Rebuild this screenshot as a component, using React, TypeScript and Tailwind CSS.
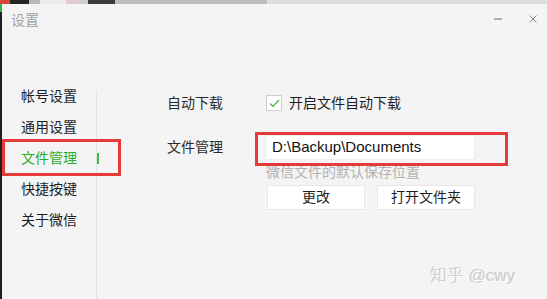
const font = { fontFamily: '"Liberation Sans", "Noto Sans CJK SC", sans-serif' };

const navItems = ["帐号设置", "通用设置", "文件管理", "快捷按键", "关于微信"];

export default function App() {
  return (
    <div
      className="relative flex h-[299px] w-[547px] flex-col overflow-hidden bg-[#f4f4f4]"
      style={font}
    >
      {/* strip of the window behind */}
      <div className="flex h-[4px] shrink-0">
        <div className="w-[10px] bg-[#d9443b]" />
        <div className="w-[19px] bg-[#232323]" />
        <div className="w-[11px] bg-[#b9b9b9]" />
        <div className="w-[26px] bg-[#ededed]" />
        <div className="w-[14px] bg-[#e4c9cf]" />
        <div className="w-[8px] bg-[#cfcfcf]" />
        <div className="w-[27px] bg-[#3a3a3a]" />
        <div className="w-[152px] bg-[#bdbdbd]" />
        <div className="flex-1 bg-[#dedede]" />
      </div>

      <div className="flex flex-1">
        <div className="flex w-[2px] flex-col bg-[#1f1f1f]">
          <div className="h-[8px] bg-[#2fb44a]" />
        </div>

        <div className="flex flex-1 flex-col">
          {/* header */}
          <div className="flex h-[77px] items-start justify-between">
            <div className="pl-[9px] pt-[6px] text-[14px] leading-[20px] text-[#a3a3a3]">
              设置
            </div>
            <div className="flex items-center gap-[27px] pr-[10px] pt-[10px]">
              <div className="h-[2px] w-[8px] bg-[#b0b0b0]" />
              <svg width="8" height="8" viewBox="0 0 8 8" className="mt-[1px]">
                <path d="M0.5 0.5 L7.5 7.5 M7.5 0.5 L0.5 7.5" stroke="#8a8a8a" strokeWidth="1" />
              </svg>
            </div>
          </div>

          {/* body */}
          <div className="flex flex-1">
            <div className="flex w-[94px] flex-col">
              {navItems.map((item) => (
                <div
                  key={item}
                  className={`relative flex h-[31px] items-center pl-[19px] text-[14px] ${
                    item === "文件管理" ? "text-[#2aae2a]" : "text-[#1e1e1e]"
                  }`}
                >
                  {item}
                  {item === "文件管理" && (
                    <div className="absolute right-[-3px] top-[10px] h-[11px] w-[2px] bg-[#3cc13c]" />
                  )}
                </div>
              ))}
            </div>
            <div className="mt-[9px] w-px bg-[#e2e2e2]" />

            <div className="flex flex-1 flex-col pl-[70px] pt-[10px]">
              <div className="flex h-[24px] items-center">
                <div className="w-[99px] text-[14px] text-[#2a2a2a]">自动下载</div>
                <div className="flex h-[16px] w-[16px] items-center justify-center border border-[#cfcfcf] bg-white">
                  <svg width="11" height="9" viewBox="0 0 11 9">
                    <path d="M1 4.5 L4 7.5 L10 1" fill="none" stroke="#3fb33f" strokeWidth="1.2" />
                  </svg>
                </div>
                <div className="ml-[7px] text-[14px] text-[#1e1e1e]">开启文件自动下载</div>
              </div>

              <div className="mt-[20px] flex h-[25px] items-center">
                <div className="w-[98px] text-[14px] text-[#2a2a2a]">文件管理</div>
                <div className="flex h-[25px] w-[210px] items-center border border-[#ededed] bg-white pl-[6px] text-[15px] text-[#111]">
                  D:\Backup\Documents
                </div>
              </div>

              <div className="ml-[99px] mt-[2px] text-[14px] leading-[20px] text-[#b2b2b2]">
                微信文件的默认保存位置
              </div>

              <div className="ml-[100px] mt-[3px] flex gap-[12px]">
                <div className="flex h-[25px] w-[98px] items-center justify-center border border-[#e6e6e6] bg-white text-[14px] text-[#1e1e1e]">
                  更改
                </div>
                <div className="flex h-[25px] w-[98px] items-center justify-center border border-[#e6e6e6] bg-white text-[14px] text-[#1e1e1e]">
                  打开文件夹
                </div>
              </div>
            </div>
          </div>
        </div>
      </div>

      {/* red annotations */}
      <div className="absolute left-[2px] top-[139px] h-[37px] w-[119px] border-[3px] border-[#e53a3a]" />
      <div className="absolute left-[255px] top-[132px] h-[34px] w-[253px] border-[3px] border-[#e53a3a]" />

      {/* watermark */}
      <div
        className="absolute left-[430px] top-[263px] text-[17px] font-light text-[#d2d2d2]"
        style={{ textShadow: "1px 1px 0 #ffffff, -0.5px -0.5px 0 #c4c4c4" }}
      >
        知乎 @cwy
      </div>
    </div>
  );
}
